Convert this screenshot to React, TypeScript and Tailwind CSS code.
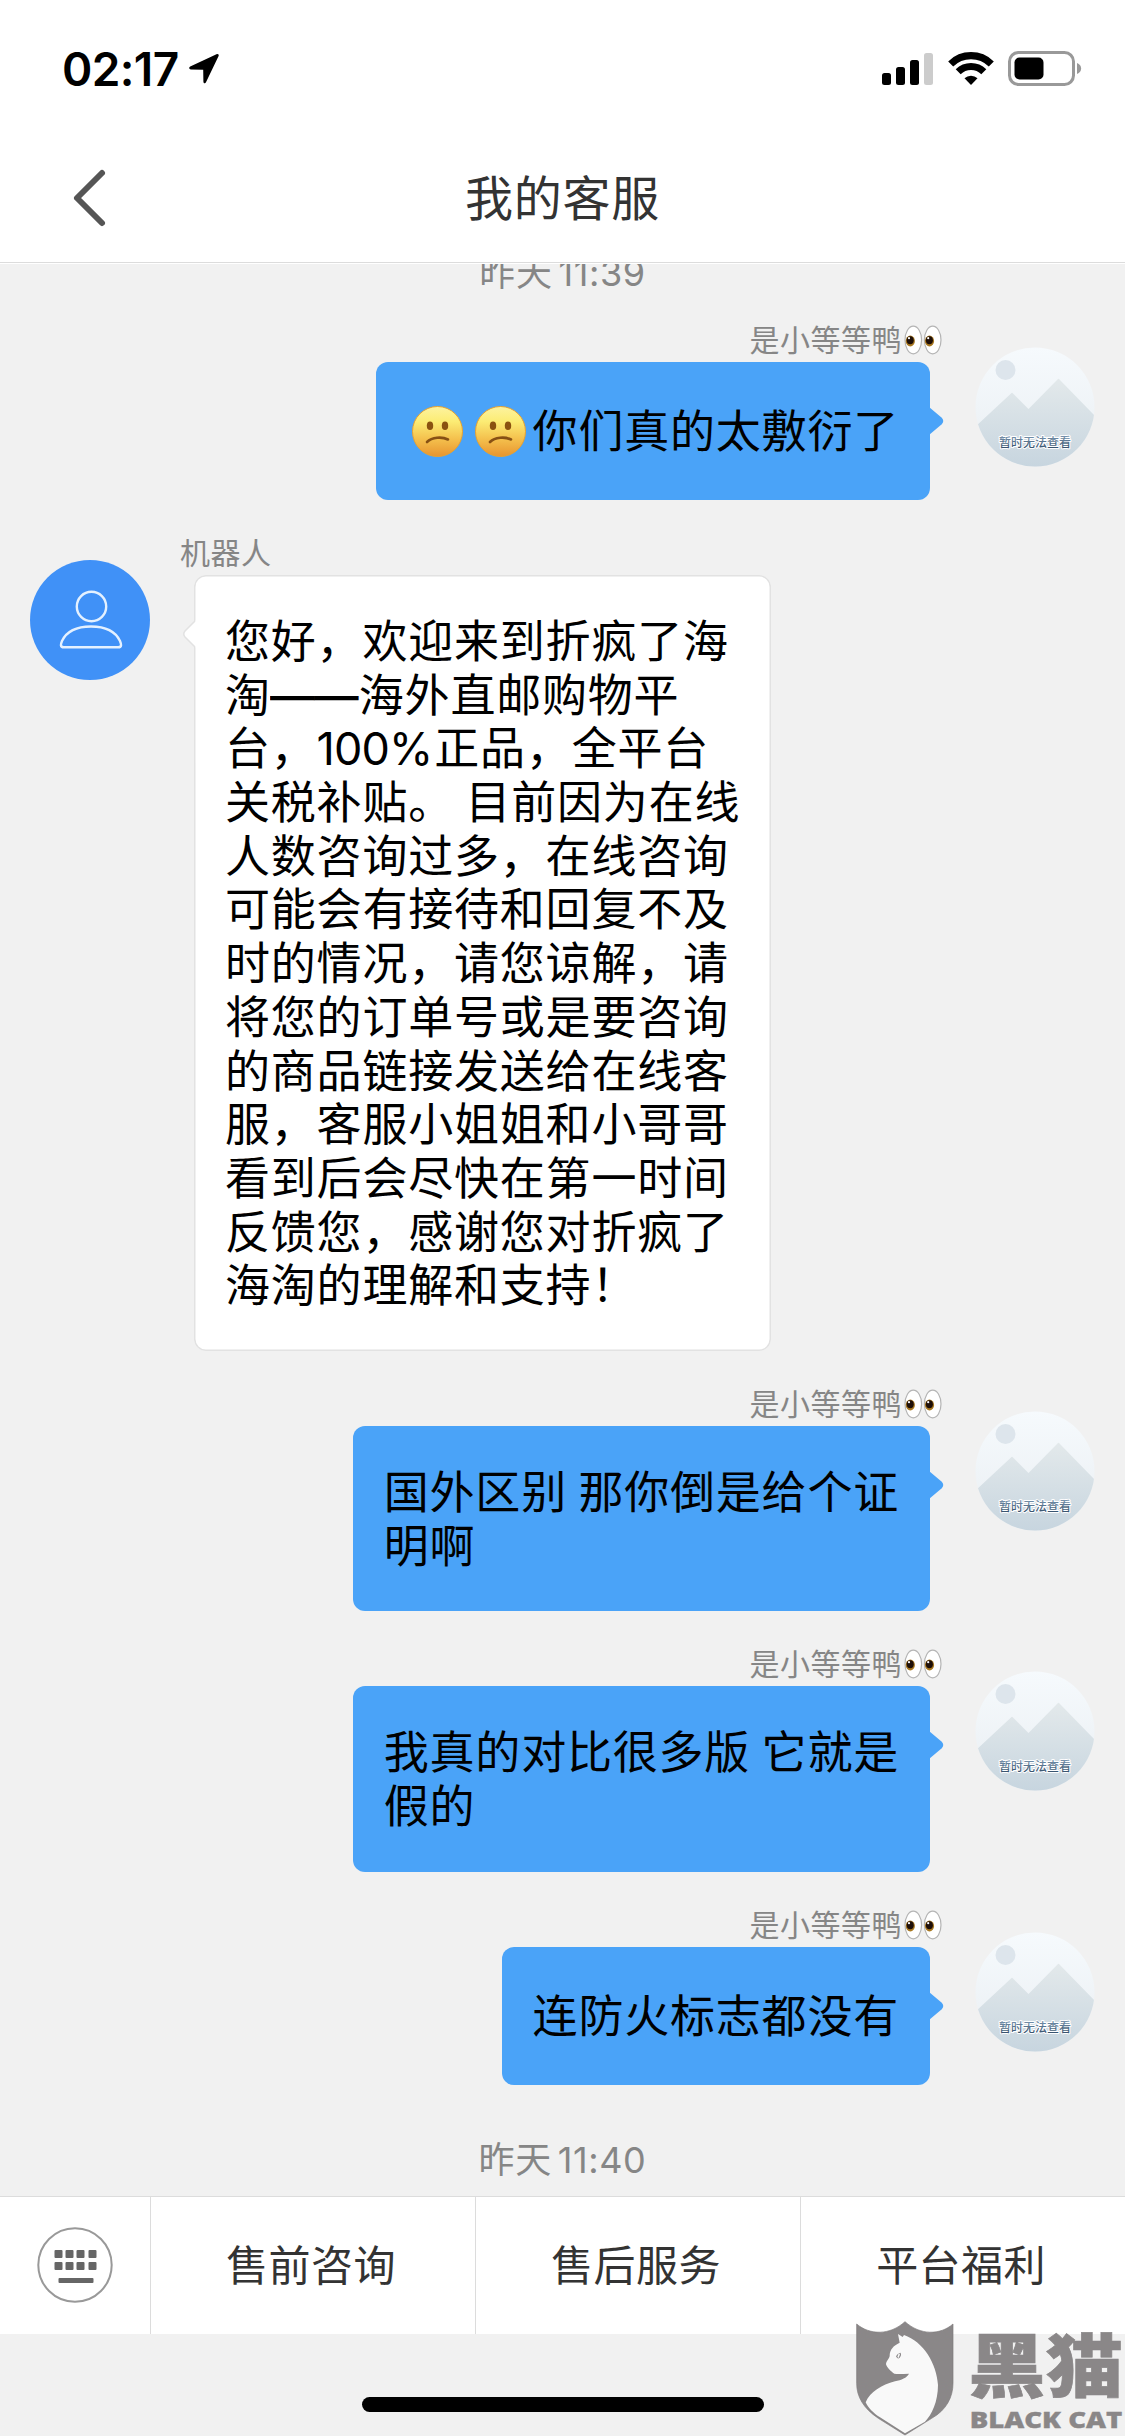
import type { ReactNode } from "react";
import clsx from "clsx";

const SANS = "font-[Inter,'Noto_Sans_CJK_SC',sans-serif]";

type Message = {
  id: number;
  from: "me" | "bot";
  lines: ReactNode[];
};

const MESSAGES: Message[] = [
  {
    id: 1,
    from: "me",
    lines: [
      <>
        <ConfusedFace />
        <ConfusedFace />
        你们真的太敷衍了
      </>,
    ],
  },
  {
    id: 2,
    from: "bot",
    lines: [
      "您好，欢迎来到折疯了海",
      <span className="flex">
        淘
        {/* the dash pair takes two character cells */}
        <span className="w-[88px]">
          <span className="-ml-[1px] block w-[88px] origin-left scale-x-[0.99] font-medium tracking-[-0.5px]">——</span>
        </span>
        海外直邮购物平
      </span>,
      <>
        台，<span className="mr-[2px] tracking-[-0.9px]">100%</span>正品，全平台
      </>,
      "关税补贴。 目前因为在线",
      "人数咨询过多，在线咨询",
      "可能会有接待和回复不及",
      "时的情况，请您谅解，请",
      "将您的订单号或是要咨询",
      "的商品链接发送给在线客",
      "服，客服小姐姐和小哥哥",
      "看到后会尽快在第一时间",
      "反馈您，感谢您对折疯了",
      "海淘的理解和支持！",
    ],
  },
  { id: 3, from: "me", lines: ["国外区别 那你倒是给个证", "明啊"] },
  { id: 4, from: "me", lines: ["我真的对比很多版 它就是", "假的"] },
  { id: 5, from: "me", lines: ["连防火标志都没有"] },
];

const MENU = ["售前咨询", "售后服务", "平台福利"];

export default function App() {
  return (
    <div className={clsx("relative flex h-[2436px] w-[1125px] flex-col overflow-hidden bg-[#f1f1f1]", SANS)}>
      <header className="flex h-[263px] shrink-0 flex-col border-b border-[#dcdcdc] bg-white">
        <StatusBar />
        <div className="grid flex-1 grid-cols-[200px_1fr_200px] items-center">
          <svg width="40" height="64" viewBox="0 0 40 64" className="-mt-[3px] ml-[69px]" fill="none">
            <path d="M33 7 L8 32 L33 57" stroke="#555" strokeWidth="6" strokeLinecap="round" strokeLinejoin="round" />
          </svg>
          <h1 className="-mt-[2px] text-center text-[48px] leading-[60px] tracking-[0.8px] text-[#333]">我的客服</h1>
        </div>
      </header>

      <main className="flex h-[1933px] shrink-0 flex-col overflow-hidden border-t border-white">
        <DateLabel className="-mt-[16px] mb-[20px]">11:39</DateLabel>
        <div className="flex flex-col gap-[31px]">
          {MESSAGES.map((m) => (
            <MessageRow key={m.id} message={m} />
          ))}
        </div>
        <DateLabel className="mt-[50px]">11:40</DateLabel>
      </main>

      <nav className="flex h-[138px] shrink-0 border-t border-[#dcdcdc] bg-white">
        <div className="flex w-[150px] items-center justify-center pb-[2px]">
          <KeyboardIcon />
        </div>
        {MENU.map((item) => (
          <div
            key={item}
            className="flex flex-1 items-center justify-center border-l border-[#dcdcdc] pr-1 text-[42px] tracking-[0.4px] text-[#333]"
          >
            {item}
          </div>
        ))}
      </nav>

      <div className="mx-auto mt-[63px] h-[15px] w-[402px] rounded-full bg-black" />
      <BlackCatLogo />
    </div>
  );
}

// ── Status bar ────────────────────────────────────────────────────────────────

function StatusBar() {
  return (
    <div className="flex h-[137px] items-center justify-between pl-[62px] pr-[43px]">
      <div className="flex items-center">
        <span className="text-[46px] font-semibold leading-[60px] tracking-[-0.6px]">02:17</span>
        <svg width="32" height="32" viewBox="0 0 32 32" className="ml-[9px]">
          <path
            d="M28.5 1.3 L2.2 13.5 C0.6 14.4 1 16.4 2.8 16.5 L15.2 16.8 L15.4 28.4 C15.5 30.7 17.3 30.9 18.1 29 L30.6 3 C31.2 1.6 29.9 .7 28.5 1.3 Z"
            fill="#000"
          />
        </svg>
      </div>
      <div className="flex items-center gap-[14px]">
        <svg width="52" height="34" viewBox="0 0 52 34">
          <rect x="0" y="21" width="9" height="12" rx="2.5" />
          <rect x="14" y="15" width="9" height="18" rx="2.5" />
          <rect x="28" y="8" width="9" height="25" rx="2.5" />
          <rect x="42" y="1" width="9" height="32" rx="2.5" fill="#ccc" />
        </svg>
        <svg width="46" height="34" viewBox="0 0 46 34">
          <path d="M23 33 L16.5 26.2 A9.6 9.6 0 0 1 29.5 26.2 Z" />
          <path d="M10.2 19.8 A18 18 0 0 1 35.8 19.8" fill="none" stroke="#000" strokeWidth="7" />
          <path d="M2.7 12 A29 29 0 0 1 43.3 12" fill="none" stroke="#000" strokeWidth="7.2" />
        </svg>
        <svg width="74" height="36" viewBox="0 0 74 36">
          <rect x="1.5" y="1.5" width="64" height="32" rx="9" fill="none" stroke="#999" strokeWidth="3" />
          <rect x="6.5" y="6.5" width="29" height="22" rx="5" />
          <path d="M69 12 C74.5 14 74.5 21 69 23 Z" fill="#999" />
        </svg>
      </div>
    </div>
  );
}

// ── Conversation ──────────────────────────────────────────────────────────────

function DateLabel({ children, className }: { children: ReactNode; className?: string }) {
  return (
    <p className={clsx("h-[50px] shrink-0 text-center text-[36px] leading-[50px] tracking-[0.6px] text-[#868686]", className)}>
      <span className="mr-[6px]">昨天</span>
      {children}
    </p>
  );
}

function MessageRow({ message }: { message: Message }) {
  const mine = message.from === "me";
  return (
    <div className={clsx("flex px-[30px]", mine && "flex-row-reverse")}>
      <div className="mt-[29px] h-[120px] w-[120px] shrink-0">{mine ? <PlaceholderAvatar /> : <RobotAvatar />}</div>
      <div className={clsx("flex flex-col", mine ? "mr-[32px] items-end" : "ml-[30px] items-start")}>
        <div className="flex h-[44px] items-center gap-[2px] pr-[1px] text-[30px] leading-[44px] tracking-[0.5px] text-[#868686]">
          {mine ? (
            <>
              是小等等鸭
              <Eyes />
            </>
          ) : (
            "机器人"
          )}
        </div>
        <div
          className={clsx(
            "relative flex min-h-[138px] flex-col justify-center rounded-[12px] px-[31px] pt-[40px] pb-[38px] text-[45px] leading-[53.7px] tracking-[0.8px] text-black [word-spacing:-2px]",
            mine ? "mr-[13px] bg-[#4aa3f8]" : "ml-[14px] bg-white shadow-[inset_0_0_0_1.5px_#e2e2e2]"
          )}
        >
          {message.lines.map((line, i) => (
            <div key={i} className="h-[53.7px] whitespace-nowrap">
              {line}
            </div>
          ))}
          {mine ? (
            <svg className="absolute -right-[14px] top-[45px]" width="15" height="28" viewBox="0 0 15 28">
              <path d="M0 0 L12.5 10.5 Q16 14 12.5 17.5 L0 28 Z" fill="#4aa3f8" />
            </svg>
          ) : (
            <svg className="absolute -left-[12px] top-[45px]" width="15" height="28" viewBox="0 0 15 28">
              <path d="M15 0 L13 1 L3 11 Q.5 14 3 17 L13 27 L15 28 Z" fill="#fff" />
              <path d="M13 1 L3 11 Q.5 14 3 17 L13 27" fill="none" stroke="#e2e2e2" strokeWidth="1.5" />
            </svg>
          )}
        </div>
      </div>
    </div>
  );
}

function RobotAvatar() {
  return (
    <svg width="120" height="120" viewBox="0 0 120 120">
      <circle cx="60" cy="60" r="60" fill="#4091f7" />
      <g fill="none" stroke="#e4f1ff" strokeWidth="2.4">
        <circle cx="61.5" cy="46.5" r="14.7" />
        <path d="M34 87.3 C29.5 87.3 31 83.5 32 81 C37 70.5 48 66.5 61 66.5 C74 66.5 85 70.5 90 81 C91 83.5 92.5 87.3 88 87.3 Z" />
      </g>
    </svg>
  );
}

function PlaceholderAvatar() {
  return (
    <svg width="120" height="120" viewBox="0 0 120 120">
      <defs>
        <linearGradient id="sky" x1="0" y1="0" x2="0" y2="1">
          <stop offset="0" stopColor="#f6fafd" />
          <stop offset="1" stopColor="#e9eef2" />
        </linearGradient>
        <linearGradient id="hill" x1="0" y1="0" x2="0" y2="1">
          <stop offset="0" stopColor="#e3e9eb" />
          <stop offset="1" stopColor="#c7d5df" />
        </linearGradient>
        <linearGradient id="caption" x1="0" y1="0" x2="0" y2="1">
          <stop offset="0" stopColor="#7f9bb5" />
          <stop offset="1" stopColor="#2f4a66" />
        </linearGradient>
        <clipPath id="disc">
          <circle cx="60" cy="60" r="59.5" />
        </clipPath>
      </defs>
      <g clipPath="url(#disc)">
        <rect width="120" height="120" fill="url(#sky)" />
        <circle cx="30.5" cy="23" r="10" fill="#dde5ec" />
        <path d="M0 80 L36 46.5 Q37 45 38 46.5 L53.5 62 L82.5 32.5 Q83.5 31 84.5 32.5 L120 69 V120 H0 Z" fill="url(#hill)" />
      </g>
      <text
        x="60"
        y="99.5"
        textAnchor="middle"
        fontSize="12"
        fontWeight="500"
        fill="url(#caption)"
        stroke="#fff"
        strokeWidth="2"
        strokeLinejoin="round"
        paintOrder="stroke"
      >
        暂时无法查看
      </text>
    </svg>
  );
}

// ── Emoji ─────────────────────────────────────────────────────────────────────

function ConfusedFace() {
  return (
    <svg width="63" height="54" viewBox="0 0 63 54" className="inline-block align-[-11px]">
      <defs>
        <linearGradient id="face" x1="0" y1="0" x2="0" y2="1">
          <stop offset="0" stopColor="#fdf3a0" />
          <stop offset=".3" stopColor="#fcec74" />
          <stop offset=".65" stopColor="#f4c04d" />
          <stop offset="1" stopColor="#e8942f" />
        </linearGradient>
      </defs>
      <circle cx="30.5" cy="26.5" r="25" fill="url(#face)" stroke="#e9a22f" strokeWidth="1" />
      <ellipse cx="23" cy="20.7" rx="3.2" ry="4.3" fill="#8a5210" />
      <ellipse cx="38" cy="20.7" rx="3.2" ry="4.3" fill="#8a5210" />
      <path d="M20 37 C25 32 35 31.5 41 34.5" fill="none" stroke="#875014" strokeWidth="2.6" strokeLinecap="round" />
    </svg>
  );
}

function Eyes() {
  return (
    <svg width="38" height="30" viewBox="0 0 38 30">
      <g fill="#fff" stroke="#b4b4b4" strokeWidth="1.2">
        <ellipse cx="9.3" cy="15" rx="8.3" ry="13.8" />
        <ellipse cx="28.7" cy="15" rx="8.3" ry="13.8" />
      </g>
      <ellipse cx="6.3" cy="16" rx="4.6" ry="5.4" fill="#a8771f" />
      <ellipse cx="25.5" cy="16" rx="4.6" ry="5.4" fill="#a8771f" />
      <ellipse cx="6.2" cy="15.3" rx="3.5" ry="4" fill="#1e0f08" />
      <ellipse cx="25.4" cy="15.3" rx="3.5" ry="4" fill="#1e0f08" />
      <circle cx="5" cy="13.2" r="1.1" fill="#fff" />
      <circle cx="24.2" cy="13.2" r="1.1" fill="#fff" />
    </svg>
  );
}

// ── Footer drawings ───────────────────────────────────────────────────────────

function KeyboardIcon() {
  const columns = [17.5, 28.5, 39.5, 51.5];
  return (
    <svg width="76" height="76" viewBox="0 0 76 76">
      <circle cx="38" cy="38" r="36.7" fill="none" stroke="#999" strokeWidth="2" />
      {columns.map((x) => (
        <g key={x} fill="#666">
          <rect x={x} y="23" width="8" height="8" rx="1" />
          <rect x={x} y="35" width="8" height="8" rx="1" />
        </g>
      ))}
      <rect x="21.5" y="51" width="35" height="5" rx="1" fill="#666" />
    </svg>
  );
}

// Watermark stamped over the bottom right corner
function BlackCatLogo() {
  return (
    <svg className="absolute bottom-0 right-0" width="285" height="126" viewBox="0 0 855 378">
      <path
        d="M50 42 C90 76 150 76 195 35 C240 76 300 76 339 42 V220 C339 260 320 300 275 325 L195 375 L115 325 C70 295 50 260 50 220 Z"
        fill="#8a8788"
        stroke="#7b797a"
        strokeWidth="2"
      />
      <path
        d="M174 72 L188 81 L192 75 C250 95 290 160 294 225 C294 275 275 315 255 335 L195 370 L120 322 C100 310 84 292 77 277 C90 245 125 225 165 214 C185 209 200 204 207 191 C190 191 175 193 163 191 C152 184 141 173 138 163 C138 153 148 147 149 138 C149 119 160 107 179 98 Z"
        fill="#f9f9f9"
      />
      <path d="M168 139 Q172 130 181 128 Q186 134 179 143 Q172 149 168 139 Z" fill="#8a8788" />
      <path d="M176 130 L180 133 L176 144 L172 141 Z" fill="#f9f9f9" />
      <g fill="#8a8788" stroke="#8a8788">
        <text
          x="385"
          y="246"
          fontSize="208"
          fontWeight="900"
          strokeWidth="2"
          textLength="464"
          lengthAdjust="spacingAndGlyphs"
          className="font-['Noto_Sans_CJK_SC',sans-serif]"
        >
          黑猫
        </text>
        <text
          x="389"
          y="355"
          fontSize="67"
          fontWeight="800"
          strokeWidth="1"
          textLength="458"
          lengthAdjust="spacingAndGlyphs"
          className="font-['Open_Sans',sans-serif]"
        >
          BLACK CAT
        </text>
      </g>
    </svg>
  );
}
